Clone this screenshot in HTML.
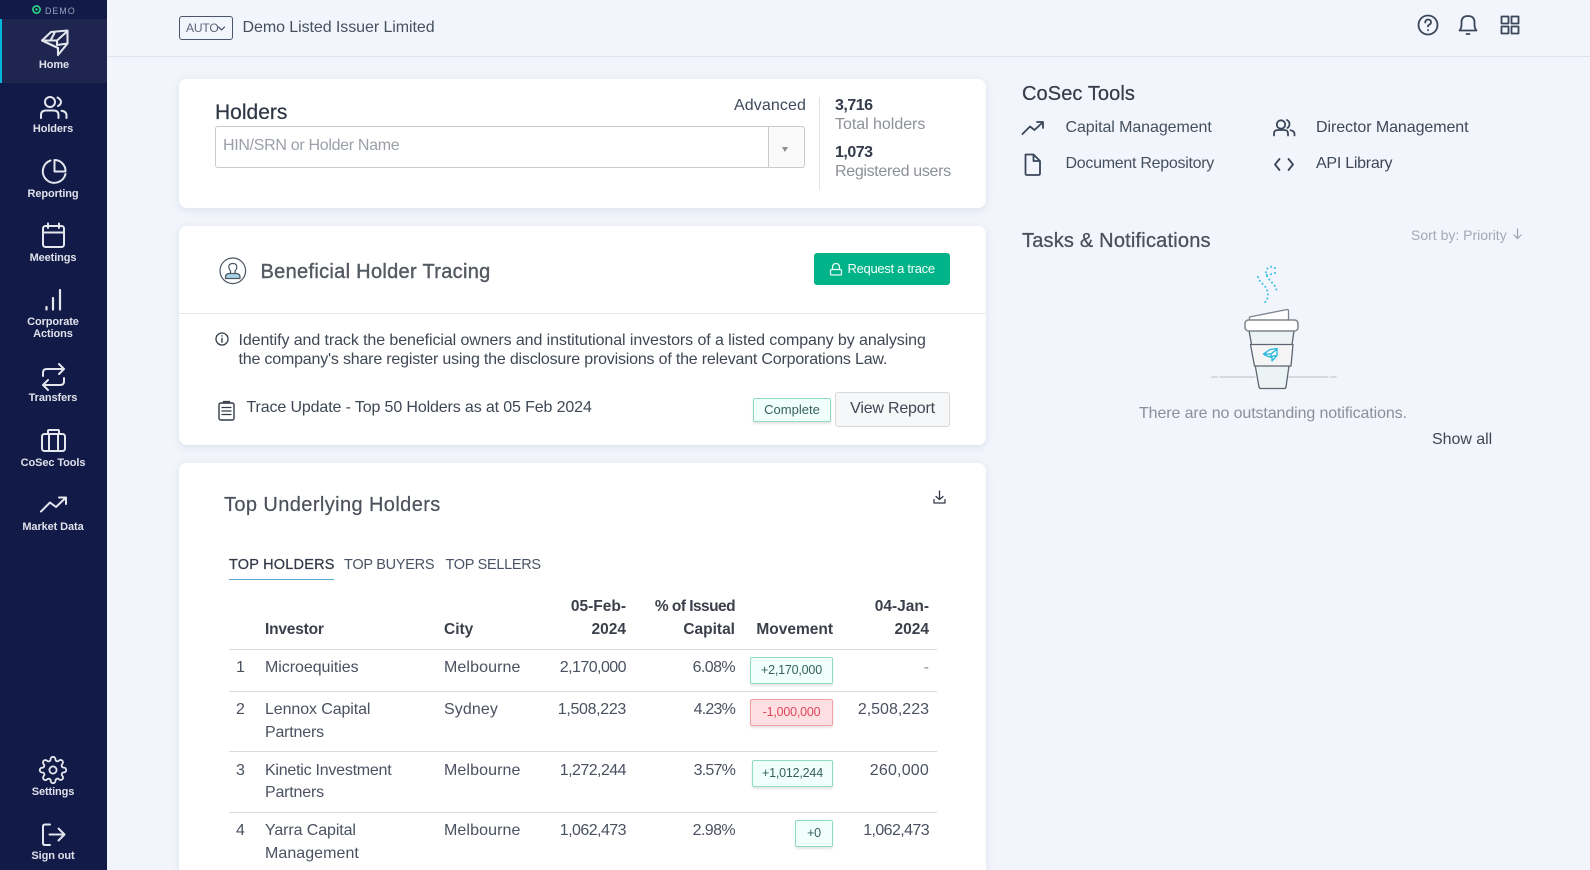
<!DOCTYPE html>
<html lang="en">
<head>
<meta charset="utf-8">
<title>Demo Listed Issuer Limited</title>
<style>
*{box-sizing:border-box}
html,body{margin:0;padding:0;width:1590px;height:870px;overflow:hidden;background:#f2f5fb;font-family:"Liberation Sans",sans-serif;color:#3d4656}
#p{position:relative;width:1590px;height:870px;overflow:hidden;background:#f2f5fb}
.a{position:absolute}
.t{position:absolute;white-space:nowrap;line-height:20px;height:20px;font-size:16px}
.r{text-align:right}
.b{font-weight:bold}
.h{font-weight:bold;color:#3a3f4a;font-size:15.5px}
.c{color:#4a5160}
#side{position:absolute;left:0;top:0;width:107px;height:870px;background:#121a47}
#home{position:absolute;left:0;top:19px;width:107px;height:64px;background:#1e264f;border-left:2px solid #00b5d8}
.lab{position:absolute;left:0;width:106px;text-align:center;font-size:11px;font-weight:bold;color:#dfe1ea;line-height:12px;height:12px;white-space:nowrap;letter-spacing:-.1px}
.ic{position:absolute;left:0;top:0;overflow:visible}
.card{position:absolute;left:179px;width:807px;background:#fff;border-radius:8px;box-shadow:0 2px 8px rgba(110,125,170,.16)}
.line{position:absolute;height:1px;background:#dcdcdc}
.badge{position:absolute;font-size:12.5px;text-align:center;line-height:24px;border:1px solid #8fdcc0;background:#f0fffb;color:#35605f;border-radius:2px;box-shadow:0 2px 2px rgba(0,0,0,.1);letter-spacing:-.2px}
.red{border-color:#f3a0a5;background:#ffe0e2;color:#e0455a}
</style>
</head>
<body>
<div id="p">
<div id="side">
  <div id="home"></div>
  <svg class="ic" width="107" height="870" fill="none" stroke="#e4e6ee" stroke-width="2" stroke-linecap="round" stroke-linejoin="round">
    <circle cx="36.5" cy="9.5" r="3.6" stroke="#2fd98a" stroke-width="1.6"/><circle cx="36.5" cy="9.5" r="1.2" fill="#2fd98a" stroke="none"/>
    <!-- home logo -->
    <path stroke-width="2.1" d="M42 40.500 L51 32 L67.500 30.500 V43.500 L58 55 V48 L49.500 44 Z M42 40.500 H57 L67 31.500 M57 40.500 V45 L67.500 43.500 M50.500 40.500 L54.500 33"/>
    <!-- holders -->
    <circle cx="50" cy="102" r="5"/><path d="M41 118 V115 Q41 110.500 46 110.500 H53.500 Q58.500 110.500 58.500 115 V118 M57.500 97.500 Q61 99.500 61 102 Q61 104.500 58 106 M61.500 110.800 Q66.500 111.500 66.500 115.500 V118"/>
    <!-- reporting -->
    <path d="M50.500 160.500 A11.500 11.500 0 1 0 65.500 174"/><path d="M54.500 160 A11 11 0 0 1 65.500 171.500 H54.500 Z"/>
    <!-- meetings -->
    <rect x="43" y="226" width="21" height="21" rx="2.500"/><path d="M43 232.500 H64 M48 223.500 V228 M59 223.500 V228"/>
    <!-- corporate -->
    <path d="M46.500 307 V309.500 M53 298 V309.500 M60 290 V309.500" stroke-width="2.200"/>
    <!-- transfers -->
    <path d="M43 376 V372.500 Q43 369 47 369 H63 M59 364 L64 369 L59 374 M64 378 V381.500 Q64 385 60 385 H44 M48 380 L43 385 L48 390"/>
    <!-- cosec tools -->
    <rect x="42" y="434" width="23" height="17" rx="2.500"/><path d="M49 451 V434 M58 451 V434 M48 434 V431 Q48 430 49 430 H58 Q59 430 59 431 V434"/>
    <!-- market -->
    <path d="M41 511.500 L50 502.500 L56 507 L66 497.500 M59 497.500 H66 V504"/>
    <!-- settings -->
    <g transform="translate(38.6,755.6) scale(1.2)" stroke-width="1.5"><path d="M12 15a3 3 0 100-6 3 3 0 000 6z"/><path d="M19.4 15a1.65 1.65 0 00.33 1.82l.06.06a2 2 0 010 2.83 2 2 0 01-2.83 0l-.06-.06a1.65 1.65 0 00-1.82-.33 1.65 1.65 0 00-1 1.51V21a2 2 0 01-2 2 2 2 0 01-2-2v-.09A1.65 1.65 0 009 19.4a1.65 1.65 0 00-1.82.33l-.06.06a2 2 0 01-2.83 0 2 2 0 010-2.83l.06-.06a1.65 1.65 0 00.33-1.82 1.65 1.65 0 00-1.51-1H3a2 2 0 01-2-2 2 2 0 012-2h.09A1.65 1.65 0 004.6 9a1.65 1.65 0 00-.33-1.82l-.06-.06a2 2 0 010-2.83 2 2 0 012.83 0l.06.06a1.65 1.65 0 001.82.33H9a1.65 1.65 0 001-1.51V3a2 2 0 012-2 2 2 0 012 2v.09a1.65 1.65 0 001 1.51 1.65 1.65 0 001.82-.33l.06-.06a2 2 0 012.83 0 2 2 0 010 2.83l-.06.06a1.65 1.65 0 00-.33 1.82V9a1.65 1.65 0 001.51 1H21a2 2 0 012 2 2 2 0 01-2 2h-.09a1.65 1.65 0 00-1.51 1z"/></g>
    <!-- sign out -->
    <path d="M50 824.500 H45 Q43 824.500 43 826.500 V843 Q43 845 45 845 H50 M49.500 834.500 H64.500 M58.500 828.500 L64.500 834.500 L58.500 840.500"/>
  </svg>
  <div class="t" style="left:45px;top:1px;font-size:9px;letter-spacing:.9px;color:#9aa0bd">DEMO</div>
  <div class="lab" style="top:59px;left:1px">Home</div>
  <div class="lab" style="top:123px">Holders</div>
  <div class="lab" style="top:188px">Reporting</div>
  <div class="lab" style="top:252px">Meetings</div>
  <div class="lab" style="top:316px">Corporate</div>
  <div class="lab" style="top:328px">Actions</div>
  <div class="lab" style="top:392px">Transfers</div>
  <div class="lab" style="top:457px">CoSec Tools</div>
  <div class="lab" style="top:521px">Market Data</div>
  <div class="lab" style="top:786px">Settings</div>
  <div class="lab" style="top:850px">Sign out</div>
</div>

<!-- header -->
<div class="line" style="left:107px;top:56px;width:1483px;background:#dfe3ec"></div>
<div class="a" style="left:179px;top:16px;width:54px;height:24px;border:1px solid #4a5568;border-radius:3px"></div>
<div class="t" style="left:186px;top:18px;font-size:12px;letter-spacing:-.15px;color:#5d6679">AUTO</div>
<svg class="ic" width="1590" height="870" fill="none" stroke="#3a4659" stroke-width="1.800" stroke-linecap="round" stroke-linejoin="round">
  <path d="M218.500 27 L221.500 30 L224.500 27" stroke-width="1.100"/>
  <!-- top right -->
  <circle cx="1428" cy="25" r="9.500"/><path d="M1425.200 22.500 Q1425.500 19.500 1428.200 19.500 Q1431 19.700 1431 22.200 Q1431 24 1428 25.500 V26.500"/><path d="M1428 30 V30.300"/>
  <path d="M1459.500 30.500 Q1461.500 28.500 1461.500 24.500 V22.500 Q1461.500 16 1468 16 Q1474.500 16 1474.500 22.500 V24.500 Q1474.500 28.500 1476.500 30.500 Z"/><path d="M1466.500 34 H1469.500"/>
  <rect x="1501.500" y="16.500" width="7" height="7"/><rect x="1511.500" y="16.500" width="7" height="7"/><rect x="1501.500" y="26.500" width="7" height="7"/><rect x="1511.500" y="26.500" width="7" height="7"/>
  <!-- tools -->
  <path d="M1022.500 134 L1030 126.500 L1034.500 130 L1043 122 M1037 122 H1043 V128"/>
  <path d="M1025.500 154.500 H1033.500 L1040 161 V173.500 Q1040 175 1038.500 175 H1027 Q1025.500 175 1025.500 173.500 Z M1033.500 154.500 V161 H1040"/>
  <circle cx="1281" cy="124.500" r="4.200"/><path d="M1274 135.500 V133.500 Q1274 130 1278 130 H1284 Q1288 130 1288 133.500 V135.500 M1287 120 Q1289.500 121.500 1289.500 124 Q1289.500 126.500 1287.500 128 M1290.500 130.300 Q1294.500 131 1294.500 134 V135.500"/>
  <path d="M1279.500 159 L1275 164.500 L1279.500 170 M1288.500 159 L1293 164.500 L1288.500 170"/>
  <path d="M1517.500 229 V238.500 M1514 235 L1517.500 238.500 L1521 235" stroke="#9aa3b0" stroke-width="1.200"/>
</svg>
<div class="t" style="left:242.500px;top:18px;color:#45505f;letter-spacing:-.07px">Demo Listed Issuer Limited</div>

<!-- holders card -->
<div class="card" style="top:79px;height:129px"></div>
<div class="t" style="left:215px;top:103px;font-size:21px;color:#2d3645;-webkit-text-stroke:.2px #2d3645">Holders</div>
<div class="t" style="left:734px;top:96px;color:#3f4a5d;letter-spacing:.1px">Advanced</div>
<div class="a" style="left:215px;top:126px;width:590px;height:42px;border:1px solid #c8cbd0;border-radius:3px;background:#fff"></div>
<div class="a" style="left:768px;top:126px;width:37px;height:42px;border:1px solid #c8cbd0;border-radius:0 3px 3px 0;background:#fafafa"></div>
<div class="a" style="left:782px;top:147px;border-left:3.500px solid transparent;border-right:3.500px solid transparent;border-top:5px solid #8d8d8d"></div>
<div class="t" style="left:223px;top:136px;color:#9ba0a8;letter-spacing:-.31px">HIN/SRN or Holder Name</div>
<div class="a" style="left:819px;top:97px;width:1px;height:93px;background:#e2e2e2"></div>
<div class="t b" style="left:835px;top:96px;color:#333a48;letter-spacing:-.5px">3,716</div>
<div class="t" style="left:835px;top:115px;color:#8c9098;letter-spacing:-.03px">Total holders</div>
<div class="t b" style="left:835px;top:143px;color:#333a48;letter-spacing:-.5px">1,073</div>
<div class="t" style="left:835px;top:162px;color:#8c9098;letter-spacing:-.32px">Registered users</div>

<!-- beneficial card -->
<div class="card" style="top:226px;height:219px"></div>
<div class="line" style="left:179px;top:313px;width:807px;background:#e6e7ea"></div>
<svg class="ic" width="1590" height="870" fill="none" stroke="#4b5563" stroke-width="1.200" stroke-linecap="round" stroke-linejoin="round">
  <circle cx="232.800" cy="270.800" r="12.800"/>
  <path d="M225.500 277 Q225.500 274 229 273.500 H236.500 Q240 274 240 277 V278.500 H225.500 Z" fill="#a9d3e6"/>
  <path d="M230.500 273 V271 Q228.800 269 228.800 267 Q228.800 263.500 232.800 263.500 Q236.800 263.500 236.800 267 Q236.800 269 235 271 V273"/>
  <circle cx="222" cy="339" r="6" stroke="#333b49" stroke-width="1.300"/><path d="M222 338.500 V342.200 M222 335.800 V336" stroke="#333b49" stroke-width="1.400"/>
  <rect x="219" y="403" width="15" height="17" rx="1.800" stroke="#333b49" stroke-width="1.400"/><path d="M223.500 403 V401.500 H229.500 V403 Z M222 407.500 H231 M222 411 H231 M222 414.500 H231" stroke="#333b49" stroke-width="1.300"/>
</svg>
<div class="t" style="left:260.500px;top:262px;font-size:20px;color:#555a62;letter-spacing:.31px;-webkit-text-stroke:.4px #555a62">Beneficial Holder Tracing</div>
<div class="a" style="left:814px;top:253px;width:136px;height:32px;background:#00b388;border-radius:3px"></div>
<svg class="ic" width="1590" height="870" fill="none" stroke="#e6fbf4" stroke-width="1.300" stroke-linejoin="round" stroke-linecap="round"><path d="M832.500 269.500 V267.500 Q832.500 263.500 836 263.500 Q839.500 263.500 839.500 267.500 V269.500"/><rect x="830.500" y="269.500" width="11" height="5.500" rx="1.200"/></svg>
<div class="t" style="left:847.500px;top:259px;font-size:13px;color:#f4fffb;letter-spacing:-.3px">Request a trace</div>
<div class="t" style="left:238.500px;top:331px;color:#3f4754;letter-spacing:-.09px">Identify and track the beneficial owners and institutional investors of a listed company by analysing</div>
<div class="t" style="left:238.500px;top:350px;color:#3f4754;letter-spacing:-.19px">the company's share register using the disclosure provisions of the relevant Corporations Law.</div>
<div class="t" style="left:246.500px;top:398px;color:#3f4754;letter-spacing:-.13px">Trace Update - Top 50 Holders as at 05 Feb 2024</div>
<div class="badge" style="left:753px;top:398px;width:78px;height:24px;line-height:21px;font-size:13px;letter-spacing:0">Complete</div>
<div class="a" style="left:835px;top:392px;width:115px;height:35px;background:#f6f7f8;border:1px solid #d9d9d9;border-radius:3px;text-align:center;line-height:31px;font-size:16px;color:#3f4754;letter-spacing:-.2px">View Report</div>

<!-- underlying card -->
<div class="card" style="top:463px;height:420px"></div>
<div class="t" style="left:224px;top:495px;font-size:20px;color:#4c515b;letter-spacing:.4px;-webkit-text-stroke:.2px #4c515b">Top Underlying Holders</div>
<svg class="ic" width="1590" height="870" fill="none" stroke="#333b49" stroke-width="1.300" stroke-linecap="round" stroke-linejoin="round"><path d="M939.500 491 V499.500 M936 496.500 L939.500 499.500 L943 496.500 M934 499.500 V503 H945 V499.500"/></svg>
<div class="t" style="left:229px;top:555px;font-size:14.5px;color:#343b49;letter-spacing:.2px;-webkit-text-stroke:.25px #343b49">TOP HOLDERS</div>
<div class="t" style="left:344px;top:555px;font-size:14.5px;color:#4a5363;letter-spacing:-.27px">TOP BUYERS</div>
<div class="t" style="left:445.500px;top:555px;font-size:14.5px;color:#4a5363;letter-spacing:-.3px">TOP SELLERS</div>
<div class="a" style="left:229px;top:579px;width:105px;height:1px;background:#5aaed6"></div>

<!-- table head -->
<div class="t h" style="left:265px;top:620px;letter-spacing:-.2px">Investor</div>
<div class="t h" style="left:444px;top:620px">City</div>
<div class="t h r" style="right:964px;top:597px">05-Feb-</div>
<div class="t h r" style="right:964px;top:620px">2024</div>
<div class="t h r" style="right:855px;top:597px;letter-spacing:-.55px">% of Issued</div>
<div class="t h r" style="right:855px;top:620px">Capital</div>
<div class="t h r" style="right:757px;top:620px">Movement</div>
<div class="t h r" style="right:661px;top:597px">04-Jan-</div>
<div class="t h r" style="right:661px;top:620px">2024</div>
<div class="line" style="left:229px;top:649px;width:708px"></div>
<div class="line" style="left:229px;top:691px;width:708px"></div>
<div class="line" style="left:229px;top:751px;width:708px"></div>
<div class="line" style="left:229px;top:812px;width:708px"></div>

<!-- row 1 -->
<div class="t c" style="left:236px;top:658px">1</div>
<div class="t c" style="left:265px;top:658px;letter-spacing:-.05px">Microequities</div>
<div class="t c" style="left:444px;top:658px;letter-spacing:.1px">Melbourne</div>
<div class="t c r" style="right:964px;top:658px;letter-spacing:-.55px">2,170,000</div>
<div class="t c r" style="right:855px;top:658px;letter-spacing:-.6px">6.08%</div>
<div class="badge" style="left:750px;top:657px;width:83px;height:27px">+2,170,000</div>
<div class="t r" style="right:661px;top:658px;color:#8a8f98">-</div>
<!-- row 2 -->
<div class="t c" style="left:236px;top:700px">2</div>
<div class="t c" style="left:265px;top:700px;letter-spacing:-.1px">Lennox Capital</div>
<div class="t c" style="left:265px;top:723px;letter-spacing:-.2px">Partners</div>
<div class="t c" style="left:444px;top:700px;letter-spacing:.1px">Sydney</div>
<div class="t c r" style="right:964px;top:700px;letter-spacing:-.33px">1,508,223</div>
<div class="t c r" style="right:855px;top:700px;letter-spacing:-.8px">4.23%</div>
<div class="badge red" style="left:750px;top:699px;width:83px;height:27px">-1,000,000</div>
<div class="t c r" style="right:661px;top:700px">2,508,223</div>
<!-- row 3 -->
<div class="t c" style="left:236px;top:761px">3</div>
<div class="t c" style="left:265px;top:761px;letter-spacing:-.24px">Kinetic Investment</div>
<div class="t c" style="left:265px;top:783px;letter-spacing:-.2px">Partners</div>
<div class="t c" style="left:444px;top:761px;letter-spacing:.1px">Melbourne</div>
<div class="t c r" style="right:964px;top:761px;letter-spacing:-.55px">1,272,244</div>
<div class="t c r" style="right:855px;top:761px;letter-spacing:-.8px">3.57%</div>
<div class="badge" style="left:752px;top:760px;width:81px;height:27px">+1,012,244</div>
<div class="t c r" style="right:661px;top:761px;letter-spacing:.2px">260,000</div>
<!-- row 4 -->
<div class="t c" style="left:236px;top:821px">4</div>
<div class="t c" style="left:265px;top:821px;letter-spacing:-.1px">Yarra Capital</div>
<div class="t c" style="left:265px;top:844px;letter-spacing:.05px">Management</div>
<div class="t c" style="left:444px;top:821px;letter-spacing:.1px">Melbourne</div>
<div class="t c r" style="right:964px;top:821px;letter-spacing:-.55px">1,062,473</div>
<div class="t c r" style="right:855px;top:821px;letter-spacing:-.6px">2.98%</div>
<div class="badge" style="left:795px;top:820px;width:38px;height:27px">+0</div>
<div class="t c r" style="right:661px;top:821px;letter-spacing:-.6px">1,062,473</div>

<!-- right col -->
<div class="t" style="left:1022px;top:84px;font-size:20px;color:#333a48;letter-spacing:.1px;-webkit-text-stroke:.2px #333a48">CoSec Tools</div>
<div class="t" style="left:1065.500px;top:118px;color:#45505f;letter-spacing:-.08px">Capital Management</div>
<div class="t" style="left:1316px;top:118px;color:#3e4858;letter-spacing:-.07px">Director Management</div>
<div class="t" style="left:1065.500px;top:154px;color:#45505f;letter-spacing:-.28px">Document Repository</div>
<div class="t" style="left:1316px;top:154px;color:#3e4858;letter-spacing:-.26px">API Library</div>
<div class="t" style="left:1022px;top:231px;font-size:20px;color:#4c515b;letter-spacing:.2px;-webkit-text-stroke:.3px #4c515b">Tasks &amp; Notifications</div>
<div class="t" style="left:1411px;top:225px;font-size:14px;color:#a3a9b3">Sort by: Priority</div>

<!-- cup -->
<svg class="ic" width="1590" height="870" fill="none" stroke-linejoin="round" stroke-linecap="round">
  <path d="M1212 377 H1217 M1220 377 H1255 M1288 377 H1328 M1331 377 H1336" stroke="#cdd0d5" stroke-width="1.500"/>
  <path d="M1249.500 320 V317 L1287 309.500 Q1288.500 309.500 1288.500 311 V320" fill="#fff" stroke="#7d858e" stroke-width="1.300"/>
  <path d="M1249 330.500 L1259 387 Q1259.500 388.500 1261 388.500 H1284 Q1285.500 388.500 1286 387 L1294 330.500 Z" fill="#ecf3f4" stroke="#5c6670" stroke-width="1.300"/>
  <path d="M1250.500 344.500 L1293 344.500 L1291 366 H1254.500 Z" fill="#f5f5f6" stroke="#5c6670" stroke-width="1.300"/>
  <rect x="1245" y="320" width="53" height="11" rx="3.500" fill="#fff" stroke="#7d858e" stroke-width="1.500"/>
  <path d="M1263.500 354 L1270 349.500 L1277 348.500 V355.500 L1272 361 V357.500 L1267 356 Z M1263.500 354 H1271 L1277 349 M1271 354 V356.500 L1277 355.500" stroke="#22b8dc" stroke-width="1.300"/>
  <path d="M1258 277 C1259 282 1264 284 1266 288 C1269 293 1269 300 1263 304 M1275 268 C1271 265 1266 268 1266 272 C1266 278 1272 282 1275 286 C1276 288 1277 291 1277 293 M1275 273 C1272 274 1268 275 1266 275" stroke="#43c0e2" stroke-width="2" stroke-dasharray=".1 4"/>
</svg>
<div class="t" style="left:1139px;top:404px;color:#8a8f98;letter-spacing:-.11px">There are no outstanding notifications.</div>
<div class="t" style="left:1432px;top:430px;color:#3f4754;letter-spacing:-.05px">Show all</div>
</div>
</body>
</html>
